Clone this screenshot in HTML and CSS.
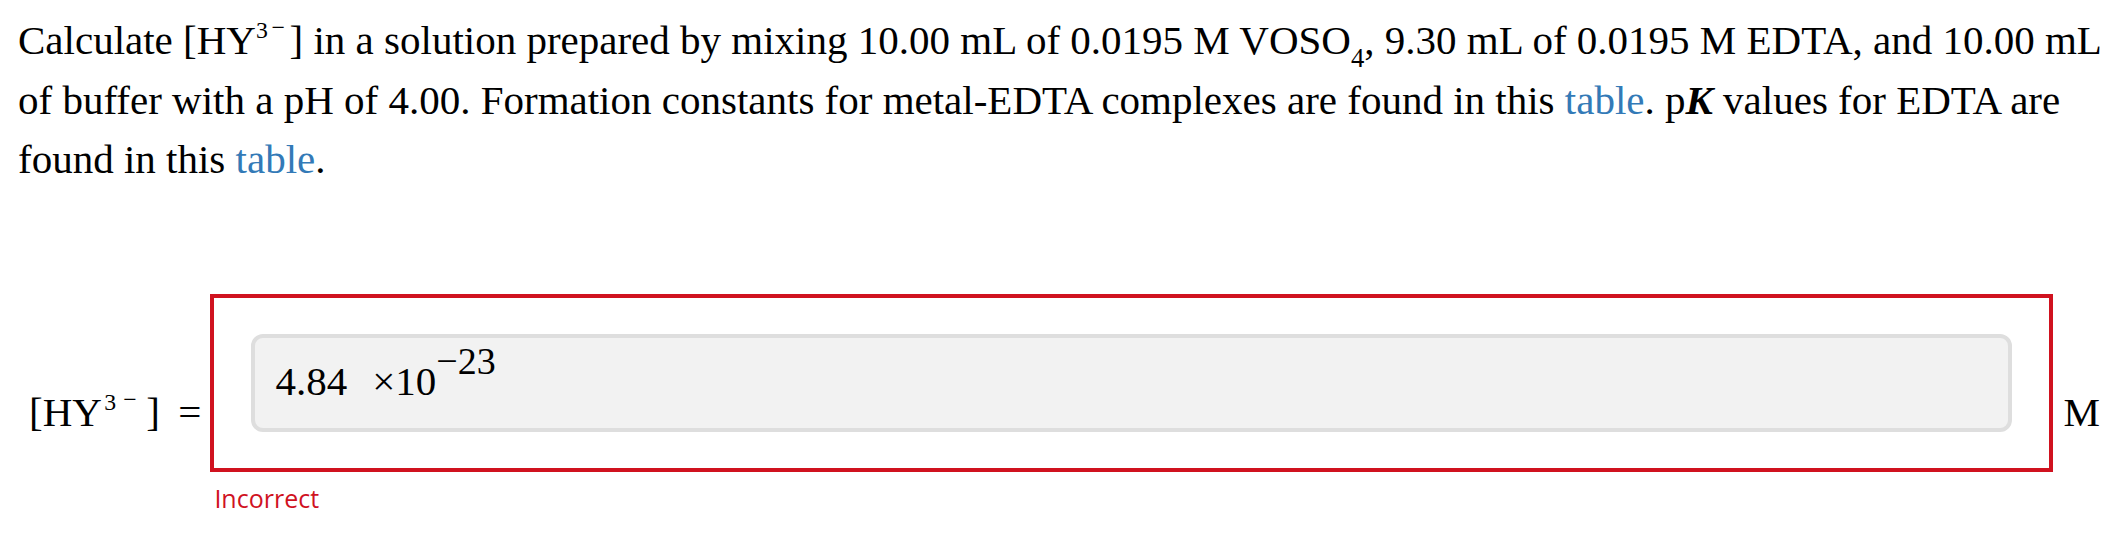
FILE: index.html
```html
<!DOCTYPE html>
<html lang="en">
<head>
<meta charset="UTF-8">
<meta name="viewport" content="width=device-width, initial-scale=1.0">
<title>HY3- concentration</title>
<link rel="stylesheet" href="styles.css">
</head>
<body>

<!-- question text -->
<p class="prompt">
    Calculate [HY<sup>3<span class="minus">&minus;</span></sup>] in a solution prepared by mixing 10.00 mL of 0.0195 M VOSO<sub>4</sub>, 9.30 mL of 0.0195 M EDTA, and 10.00 mL of buffer with a pH of 4.00. Formation constants for metal-EDTA complexes are found in this <a href="#">table</a>. p<b><i>K</i></b> values for EDTA are found in this <a href="#">table</a>.
</p>

<!-- answer -->
<div class="answer-row">
    <span class="label">[HY<sup>3<span class="minus">&minus;</span></sup>]<span class="equals">=</span></span>
    <div class="answer-field">
        <div class="answer-box incorrect">
            <div class="answer-input">4.84<span class="times">&times;10<sup>&minus;23</sup></span></div>
        </div>
        <div class="feedback">Incorrect</div>
    </div>
    <span class="unit">M</span>
</div>

</body>
</html>
```

FILE: styles.css
```css
/* page */
body {
    margin: 0;
    padding: 0 18px;
    background: #fff;
    color: #000;
    font-family: "Liberation Serif", "Times New Roman", serif;
    font-size: 41px;
}

.prompt {
    margin: 11px 0 0 0;
    line-height: 59.5px;
}

.prompt a {
    color: #337ab7;
    text-decoration: none;
}

sup {
    font-size: 0.58em;
    line-height: 0;
    vertical-align: 0.66em;
}

sup .minus {
    margin-left: 0.15em;
    margin-right: 0.2em;
    vertical-align: 0.12em;
}

sub {
    font-size: 0.65em;
    line-height: 0;
    vertical-align: -0.48em;
}

/* answer row */
.answer-row {
    display: flex;
    align-items: flex-start;
    margin-top: 104px;
    padding: 0 0 0 11px;
}

.label {
    margin-top: 88px;
    line-height: 60px;
    white-space: nowrap;
    margin-right: 9px;
}

.label sup {
    margin-left: 0.1em;
}

.label sup .minus {
    margin-left: 0.3em;
    margin-right: 0.4em;
}

.equals {
    margin-left: 0.45em;
}

.answer-field {
    flex: 1;
}

.answer-box {
    border: 4px solid #ccc;
    padding: 36px 37px;
}

.answer-box.incorrect {
    border-color: #d0121f;
}

.answer-input {
    height: 98px;
    box-sizing: border-box;
    border: 4px solid #dedede;
    border-radius: 12px;
    background: #f2f2f2;
    padding: 23px 20px 0;
    font-size: 41px;
    line-height: 1;
}

.times {
    margin-left: 25px;
}

.answer-input sup {
    font-size: 38px;
    vertical-align: 21px;
}

.feedback {
    margin-top: 9px;
    padding-left: 4px;
    font-family: "Open Sans", sans-serif;
    font-size: 25px;
    color: #d0121f;
}

.unit {
    margin-top: 88px;
    margin-left: 11px;
    margin-right: 10px;
    line-height: 60px;
}
```
